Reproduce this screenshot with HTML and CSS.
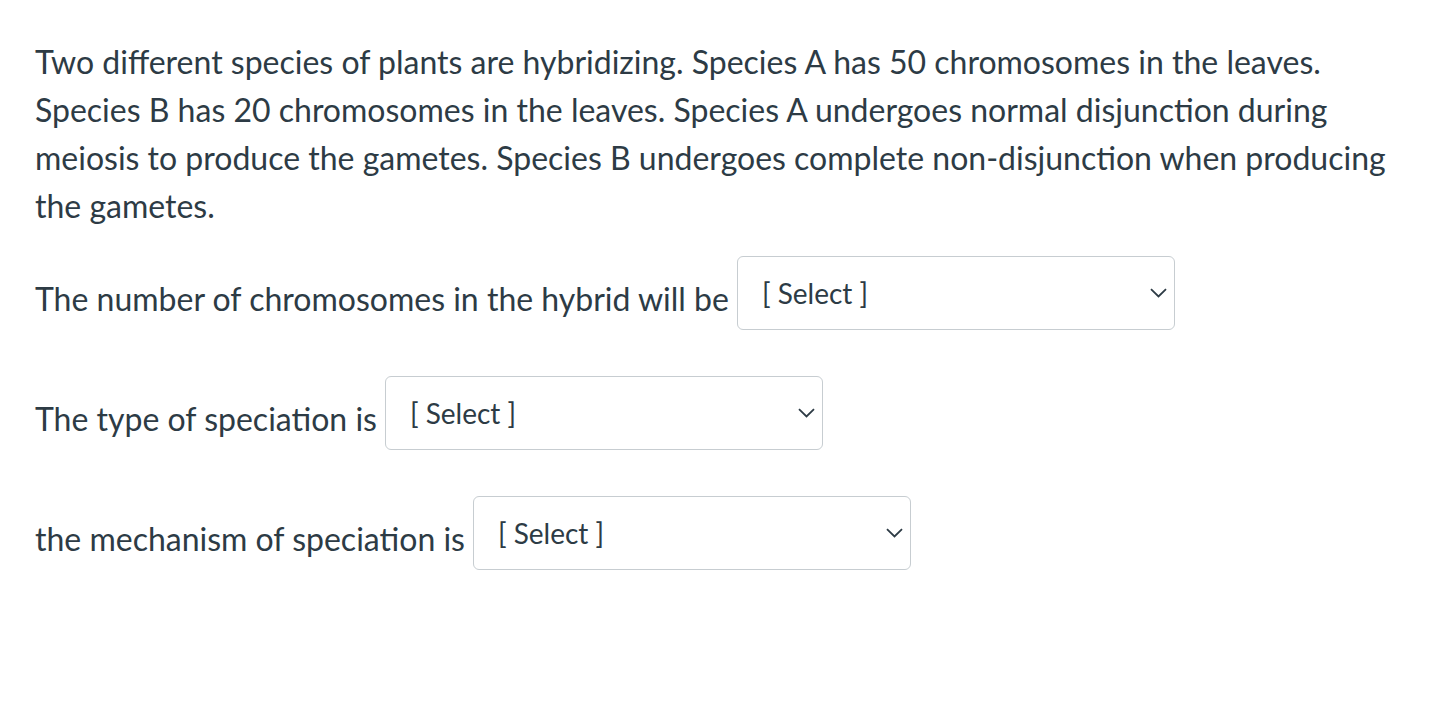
FILE: index.html
```html
<!DOCTYPE html>
<html lang="en">
<head>
<meta charset="utf-8">
<title>Question</title>
<link rel="stylesheet" href="styles.css">
</head>
<body>
<div class="question">
  <p class="intro">Two different species of plants are hybridizing. Species A has 50 chromosomes in the leaves. Species B has 20 chromosomes in the leaves. Species A undergoes normal disjunction during meiosis to produce the gametes. Species B undergoes complete non-disjunction when producing the gametes.</p>
  <div class="row">
    <span class="label">The number of chromosomes in the hybrid will be</span>
    <div class="select">
      <span class="select-text">[ Select ]</span>
      <svg class="chev" width="17" height="10" viewBox="0 0 17 10"><path d="M1 1.2 L8.5 8.5 L16 1.2" fill="none" stroke="#2d3b45" stroke-width="1.8"/></svg>
    </div>
  </div>
  <div class="row">
    <span class="label">The type of speciation is</span>
    <div class="select">
      <span class="select-text">[ Select ]</span>
      <svg class="chev" width="17" height="10" viewBox="0 0 17 10"><path d="M1 1.2 L8.5 8.5 L16 1.2" fill="none" stroke="#2d3b45" stroke-width="1.8"/></svg>
    </div>
  </div>
  <div class="row">
    <span class="label">the mechanism of speciation is</span>
    <div class="select">
      <span class="select-text">[ Select ]</span>
      <svg class="chev" width="17" height="10" viewBox="0 0 17 10"><path d="M1 1.2 L8.5 8.5 L16 1.2" fill="none" stroke="#2d3b45" stroke-width="1.8"/></svg>
    </div>
  </div>
</div>
</body>
</html>
```
FILE: styles.css
```css
html, body {
  margin: 0;
  padding: 0;
  background: #ffffff;
}
body {
  font-family: Lato, "Open Sans", sans-serif;
  color: #2d3b45;
}
.question {
  padding: 38px 0 0 35px;
  width: 1370px;
}
.intro {
  margin: 0;
  font-size: 32px;
  line-height: 48px;
}
.row {
  display: flex;
  align-items: flex-start;
  margin-top: 26px;
}
.row + .row {
  margin-top: 46px;
}
.label {
  font-size: 32px;
  line-height: 48px;
  margin-top: 19px;
  margin-right: 8px;
  white-space: nowrap;
}
.select {
  box-sizing: border-box;
  width: 438px;
  height: 74px;
  border: 1px solid #c7cdd1;
  border-radius: 6px;
  display: flex;
  align-items: center;
  justify-content: space-between;
  padding: 0 7px 0 24px;
}
.select-text {
  font-size: 28px;
  line-height: 34px;
}
.chev {
  display: block;
}
```
